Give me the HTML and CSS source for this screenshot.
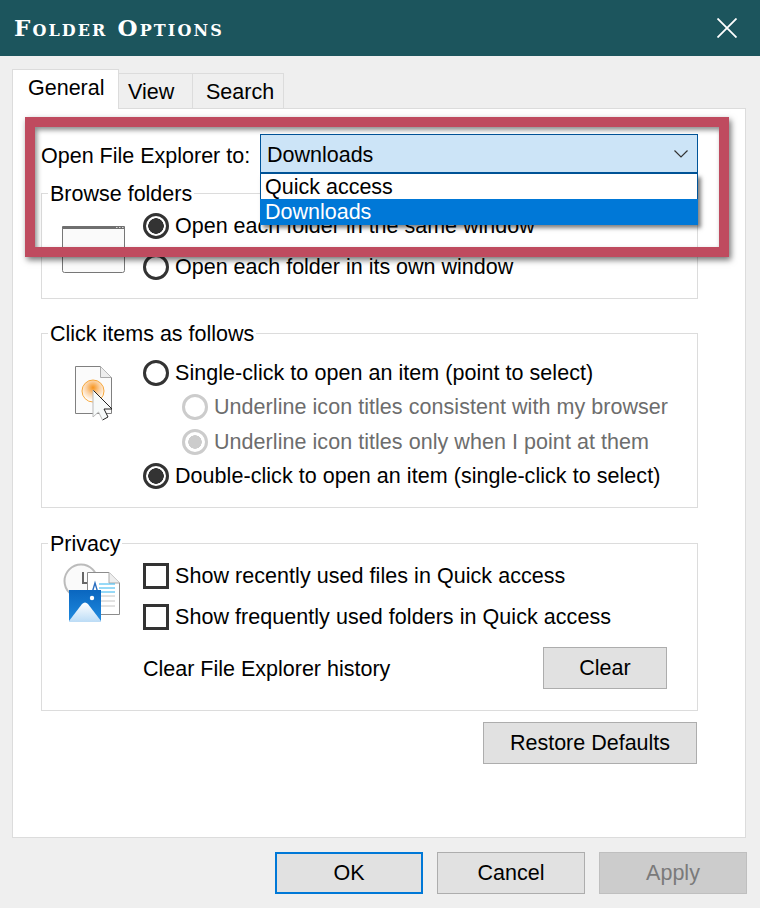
FILE: index.html
```html
<!DOCTYPE html>
<html lang="en">
<head>
  <meta charset="UTF-8">
  <title>Folder Options</title>
  <link rel="stylesheet" href="styles.css">
</head>
<body>
  <!-- Barre de titre -->
  <header class="title-bar">
    <span class="title">Folder Options</span>
    <svg class="close-icon" width="20" height="20" viewBox="0 0 20 20"><path d="M0.5 0.5 L19.5 19.5 M19.5 0.5 L0.5 19.5" stroke="#fff" stroke-width="1.8" fill="none"/></svg>
  </header>

  <!-- Onglets -->
  <nav class="tabs">
    <div class="tab tab-active">General</div>
    <div class="tab tab-view">View</div>
    <div class="tab tab-search">Search</div>
  </nav>

  <main class="panel">
    <div class="open-row">
      <span class="open-label">Open File Explorer to:</span>
      <div class="combo">
        <span class="combo-value">Downloads</span>
        <svg width="14" height="8" viewBox="0 0 14 8"><path d="M0.5 0.5 L7 7 L13.5 0.5" stroke="#333" stroke-width="1.2" fill="none"/></svg>
        <!-- Liste déroulante ouverte -->
        <div class="combo-list">
          <div class="combo-item">Quick access</div>
          <div class="combo-item combo-item-selected">Downloads</div>
        </div>
      </div>
    </div>

    <fieldset class="group group-browse">
      <legend>Browse folders</legend>
      <div class="group-body">
        <svg class="icon icon-window" width="64" height="47" viewBox="0 0 64 47">
          <rect x="0.5" y="0.5" width="62" height="46" rx="2" fill="#fafafa" stroke="#777"/>
          <rect x="0" y="0" width="63" height="3" rx="1" fill="#6f6f6f"/>
          <path d="M54 1.5h1.5M57 1.5h1.5M60 1.5h1.5" stroke="#ddd" stroke-width="1"/>
        </svg>
        <div class="options options-wide">
          <div class="option"><span class="radio radio-on"></span>Open each folder in the same window</div>
          <div class="option"><span class="radio"></span>Open each folder in its own window</div>
        </div>
      </div>
    </fieldset>

    <fieldset class="group group-click">
      <legend>Click items as follows</legend>
      <div class="group-body">
        <svg class="icon icon-click" width="40" height="56" viewBox="0 0 40 56">
          <defs>
            <radialGradient id="glow" cx="0.5" cy="0.35" r="0.6">
              <stop offset="0" stop-color="#f7941d"/>
              <stop offset="0.5" stop-color="#fbd0a0"/>
              <stop offset="1" stop-color="#fff"/>
            </radialGradient>
          </defs>
          <path d="M1.5 1.5 H26.5 L37.5 12.5 V48.5 H1.5 Z" fill="#fbfbfb" stroke="#808080"/>
          <path d="M26.5 1.5 V12.5 H37.5" fill="#eee" stroke="#aaa"/>
          <circle cx="19" cy="26" r="11" fill="url(#glow)" stroke="#f7a83c" stroke-width="1"/>
          <path d="M19 25 L38 44 L30 44 L34 52 L28.5 55 L24.5 47 L19 52 Z" fill="#f7fafa"/>
          <path d="M19 25 L38 44 L30 44 L34 52 L28.5 55" fill="none" stroke="#222" stroke-width="1"/>
          <path d="M28.5 55 L24.5 47 L19 52 V25" fill="none" stroke="#bbb" stroke-width="1"/>
        </svg>
        <div class="options">
          <div class="option"><span class="radio"></span>Single-click to open an item (point to select)</div>
          <div class="option option-sub"><span class="radio radio-off"></span>Underline icon titles consistent with my browser</div>
          <div class="option option-sub option-sub-2"><span class="radio radio-off radio-on"></span>Underline icon titles only when I point at them</div>
          <div class="option"><span class="radio radio-on"></span>Double-click to open an item (single-click to select)</div>
        </div>
      </div>
    </fieldset>

    <fieldset class="group group-privacy">
      <legend>Privacy</legend>
      <div class="group-body">
        <svg class="icon icon-privacy" width="58" height="60" viewBox="0 0 58 60">
          <defs>
            <linearGradient id="sky" x1="0" y1="0" x2="0" y2="1">
              <stop offset="0" stop-color="#0a66bf"/>
              <stop offset="1" stop-color="#1f8be0"/>
            </linearGradient>
            <linearGradient id="peak" x1="0" y1="0" x2="0" y2="1">
              <stop offset="0" stop-color="#fff"/>
              <stop offset="1" stop-color="#bcdcf6"/>
            </linearGradient>
          </defs>
          <circle cx="18" cy="18" r="16.5" fill="#fafafa" stroke="#bbb" stroke-width="2"/>
          <path d="M20 9 V20 H26" stroke="#666" stroke-width="2" fill="none"/>
          <path d="M24.5 9.5 H46 L56.5 20 V51.5 H24.5 Z" fill="#fff" stroke="#8c8c8c"/>
          <path d="M46 9.5 V20 H56.5" fill="#eee" stroke="#aaa"/>
          <path d="M36 21h16M36 25h16M36 29h16" stroke="#2fb4f0" stroke-width="1"/>
          <path d="M36 33h16M36 38h16M36 43h16" stroke="#c4c4c4" stroke-width="1"/>
          <path d="M29 30 L32 20 L35 30 Z M29 30h6" fill="none" stroke="#2a6fc0" stroke-width="1.4"/>
          <rect x="6" y="27" width="32" height="32" fill="url(#sky)"/>
          <circle cx="29" cy="35" r="2.2" fill="#fff"/>
          <path d="M6 58 L19 41 Q22 38 25 41 L38 58 V59 H6 Z" fill="url(#peak)"/>
        </svg>
        <div class="options options-wide">
          <div class="option"><span class="check"></span>Show recently used files in Quick access</div>
          <div class="option"><span class="check"></span>Show frequently used folders in Quick access</div>
          <div class="clear-row">
            <span class="clear-label">Clear File Explorer history</span>
            <button class="btn btn-clear">Clear</button>
          </div>
        </div>
      </div>
    </fieldset>

    <div class="restore-row">
      <button class="btn btn-restore">Restore Defaults</button>
    </div>
  </main>

  <footer class="footer">
    <button class="btn btn-main btn-default">OK</button>
    <button class="btn btn-main">Cancel</button>
    <button class="btn btn-main btn-disabled">Apply</button>
  </footer>

  <!-- Cadre rouge d'annotation -->
  <div class="highlight"></div>
</body>
</html>
```

FILE: styles.css
```css
/* Style global */
body, html {
  margin: 0;
  padding: 0;
  width: 760px;
  height: 908px;
  overflow: hidden;
}

body {
  position: relative;
  display: flex;
  flex-direction: column;
  background: #efefef;
  color: #000;
  font-family: "Liberation Sans", Arial, sans-serif;
  font-size: 21.5px;
  line-height: 24px;
}

/* Barre de titre */
.title-bar {
  height: 56px;
  flex: none;
  display: flex;
  justify-content: space-between;
  align-items: center;
  padding: 0 23px 0 14px;
  box-sizing: border-box;
  background: #1c555d;
}

.title {
  color: #fff;
  font-family: "DejaVu Serif", "Liberation Serif", serif;
  font-size: 23px;
  font-weight: bold;
  font-variant: small-caps;
  letter-spacing: 2.1px;
}

/* Onglets */
.tabs {
  height: 53px;
  flex: none;
  display: flex;
  align-items: flex-end;
  padding-left: 12px;
  box-sizing: border-box;
  margin-bottom: -1px;
  position: relative;
  z-index: 1;
}

.tab {
  height: 36px;
  box-sizing: border-box;
  border: 1px solid #dcdcdc;
  border-left: none;
  padding: 6px 0 0 13px;
}

.tab-active {
  width: 107px;
  height: 40px;
  border: 1px solid #dcdcdc;
  border-bottom: none;
  background: #fff;
  padding: 6px 0 0 15px;
}

.tab-view {
  width: 74px;
  padding-left: 9px;
}

.tab-search {
  width: 91px;
}

.panel {
  height: 730px;
  flex: none;
  box-sizing: border-box;
  margin: 0 14px 0 12px;
  padding: 25px 47px 0 28px;
  background: #fff;
  border: 1px solid #dcdcdc;
}

/* Liste déroulante */
.open-row {
  display: flex;
  align-items: center;
  justify-content: space-between;
}

.open-label {
  padding-top: 4px;
}

.combo {
  position: relative;
  width: 438px;
  height: 40px;
  box-sizing: border-box;
  display: flex;
  align-items: center;
  justify-content: space-between;
  padding: 0 9px 0 6px;
  background: #cce4f7;
  border: 1px solid #005499;
  border-bottom-width: 2px;
}

.combo-value {
  padding-top: 2px;
}

.combo-list {
  position: absolute;
  top: 39px;
  left: -1px;
  width: 438px;
  height: 51px;
  box-sizing: border-box;
  padding-top: 1px;
  background: #fff;
  border: 1px solid #005499;
  border-top: none;
  box-shadow: 3px 3px 4px rgba(0, 0, 0, 0.5);
  z-index: 2;
}

.combo-item {
  height: 24px;
  padding-left: 4px;
  line-height: 25px;
}

.combo-item-selected {
  height: 26px;
  margin: 0 -1px;
  padding-left: 5px;
  line-height: 26px;
  background: #0078d7;
  color: #fff;
}

/* Groupes */
.group {
  margin: 0;
  padding: 0;
  min-width: 0;
  border: 1px solid #dcdcdc;
}

.group legend {
  height: 24px;
  margin-left: 6px;
  padding: 0 2px;
  line-height: 26px;
}

.group-browse {
  margin-top: 7px;
}

.group-click {
  margin-top: 22px;
}

.group-privacy {
  margin-top: 23px;
}

.group-click .option,
.group-privacy .option {
  letter-spacing: 0.05px;
}

.group-body {
  display: flex;
}

.group-browse .group-body {
  padding: 8px 0 18px;
}

.group-click .group-body {
  padding: 15px 0 18px;
}

.group-privacy .group-body {
  padding: 8px 0 21px;
}

.icon {
  flex: none;
  display: block;
}

.icon-window {
  margin: 13px 17px 0 20px;
}

.icon-click {
  margin: 5px 29px 0 32px;
}

.icon-privacy {
  margin: 0 22px 0 21px;
}

.options {
  display: flex;
  flex-direction: column;
  gap: 8px;
  flex: 1;
}

.options-wide {
  gap: 15px;
}

.option {
  height: 26px;
  display: flex;
  align-items: center;
  gap: 6px;
  line-height: 24px;
}

.option-sub {
  margin-left: 39px;
  color: #6d6d6d;
}

.option-sub-2 {
  margin-top: 1px;
}

/* Boutons radio et cases */
.radio,
.check {
  flex: none;
  width: 26px;
  height: 26px;
  box-sizing: border-box;
  border: 3px solid #333;
  background: #fff;
}

.radio {
  border-radius: 50%;
}

.radio-on {
  background: radial-gradient(circle, #333 0 7.5px, #fff 8px);
}

.radio-off {
  border-color: #ccc;
}

.radio-off.radio-on {
  background: radial-gradient(circle, #ccc 0 6.5px, #fff 7px);
}

.clear-row {
  display: flex;
  align-items: center;
  justify-content: space-between;
  margin-top: 2px;
  padding-right: 30px;
}

.clear-label {
  padding-top: 2px;
}

/* Boutons */
.btn {
  display: block;
  height: 42px;
  padding: 0;
  box-sizing: border-box;
  background: #e1e1e1;
  border: 1px solid #adadad;
  color: #000;
  font: inherit;
}

.btn-clear {
  width: 124px;
}

.btn-restore {
  width: 214px;
}

.restore-row {
  display: flex;
  justify-content: flex-end;
  margin: 11px 1px 0 0;
}

.footer {
  display: flex;
  justify-content: flex-end;
  gap: 14px;
  padding: 14px 13px 0 0;
}

.btn-main {
  width: 148px;
}

.btn-default {
  border: 2px solid #0078d7;
}

.btn-disabled {
  background: #ccc;
  border-color: #bfbfbf;
  color: #7a7a7a;
}

/* Cadre d'annotation par-dessus la fenêtre */
.highlight {
  position: absolute;
  top: 117px;
  left: 25px;
  width: 704px;
  height: 140px;
  box-sizing: border-box;
  border: 10px solid #bf4b5f;
  box-shadow: 2px 3px 6px rgba(0, 0, 0, 0.55), inset 2px 3px 5px rgba(0, 0, 0, 0.45);
  z-index: 3;
}
```
